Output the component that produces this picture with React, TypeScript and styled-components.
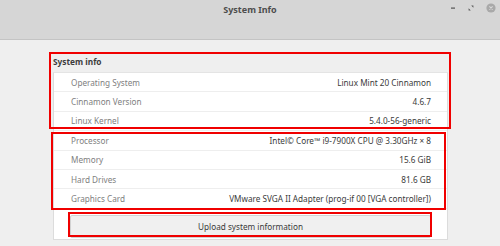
import styled, { createGlobalStyle } from 'styled-components';

const GlobalStyle = createGlobalStyle`
  html, body {
    margin: 0;
    padding: 0;
    background: #efefef;
  }
  body {
    font-family: "Noto Sans", "DejaVu Sans", sans-serif;
  }
`;

const Window = styled.div`
  position: relative;
  width: 500px;
  height: 246px;
  overflow: hidden;
  background: #efefef;
`;

const TitleBar = styled.div`
  height: 39px;
  background: #d6d6d6;
  border-bottom: 1px solid #c4c4c4;
  display: grid;
  grid-template-columns: 1fr auto 1fr;
  align-items: start;
`;

const Title = styled.div`
  grid-column: 2;
  padding-top: 3px;
  font-size: 9px;
  font-weight: bold;
  color: #4d4d4d;
`;

const Controls = styled.div`
  grid-column: 3;
  justify-self: end;
  display: flex;
  align-items: center;
  gap: 12px;
  padding: 3px 4px 0 0;
  height: 10px;
`;

const Content = styled.div`
  padding: 12px 52px 0 53px;
`;

const SectionTitle = styled.div`
  height: 20px;
  line-height: 20px;
  font-size: 8.3px;
  font-weight: bold;
  color: #3c3c3c;
`;

const Panel = styled.div`
  background: #fff;
  border: 1px solid #dcdcdc;
  border-top-color: #e4e4e4;
`;

const Row = styled.div`
  height: 19.4px;
  box-sizing: border-box;
  display: flex;
  align-items: center;
  justify-content: space-between;
  padding: 0 16px 0 17px;
  font-size: 8.2px;
  border-bottom: 1px solid #eeeeee;
`;

const Label = styled.span`
  color: #808080;
`;

const Value = styled.span`
  color: #3a3a3a;
`;

const ButtonArea = styled.div`
  padding: 4px 16px 1px 16px;
`;

const UploadButton = styled.button`
  width: 100%;
  height: 23px;
  border: 1px solid #d2d2d2;
  border-radius: 2px;
  background: #f0f0f0;
  font-family: inherit;
  font-size: 8.2px;
  color: #3a3a3a;
  padding: 0;
`;

const Highlight = styled.div<{ $x: number; $y: number; $w: number; $h: number }>`
  position: absolute;
  left: ${(p) => p.$x}px;
  top: ${(p) => p.$y}px;
  width: ${(p) => p.$w}px;
  height: ${(p) => p.$h}px;
  box-sizing: border-box;
  border: 2px solid #f00000;
  pointer-events: none;
`;

const rows: [string, string][] = [
  ['Operating System', 'Linux Mint 20 Cinnamon'],
  ['Cinnamon Version', '4.6.7'],
  ['Linux Kernel', '5.4.0-56-generic'],
  ['Processor', 'Intel© Core™ i9-7900X CPU @ 3.30GHz × 8'],
  ['Memory', '15.6 GiB'],
  ['Hard Drives', '81.6 GB'],
  ['Graphics Card', 'VMware SVGA II Adapter (prog-if 00 [VGA controller])'],
];

const MinimizeIcon = () => (
  <svg width="6" height="6" viewBox="0 0 6 6">
    <rect x="1" y="2.5" width="4" height="1.2" fill="#555" />
  </svg>
);

const MaximizeIcon = () => (
  <svg width="6" height="6" viewBox="0 0 6 6">
    <path d="M3.2 0.6 H5.4 V2.8 Z M0.6 3.2 V5.4 H2.8 Z" fill="#555" />
  </svg>
);

const CloseIcon = () => (
  <svg width="10" height="10" viewBox="0 0 10 10">
    <circle cx="5" cy="5" r="4.6" fill="#a9a9a9" />
    <path d="M3.4 3.4 L6.6 6.6 M6.6 3.4 L3.4 6.6" stroke="#d8d8d8" strokeWidth="1.1" />
  </svg>
);

export default function App() {
  return (
    <>
      <GlobalStyle />
      <Window>
        <TitleBar>
          <Title>System Info</Title>
          <Controls>
            <MinimizeIcon />
            <MaximizeIcon />
            <CloseIcon />
          </Controls>
        </TitleBar>
        <Content>
          <SectionTitle>System info</SectionTitle>
          <Panel>
            {rows.map(([label, value]) => (
              <Row key={label}>
                <Label>{label}</Label>
                <Value>{value}</Value>
              </Row>
            ))}
            <ButtonArea>
              <UploadButton>Upload system information</UploadButton>
            </ButtonArea>
          </Panel>
        </Content>
        <Highlight $x={49} $y={52} $w={402} $h={77} />
        <Highlight $x={51} $y={132} $w={395} $h={78} />
        <Highlight $x={68} $y={212} $w={364} $h={25} />
      </Window>
    </>
  );
}
